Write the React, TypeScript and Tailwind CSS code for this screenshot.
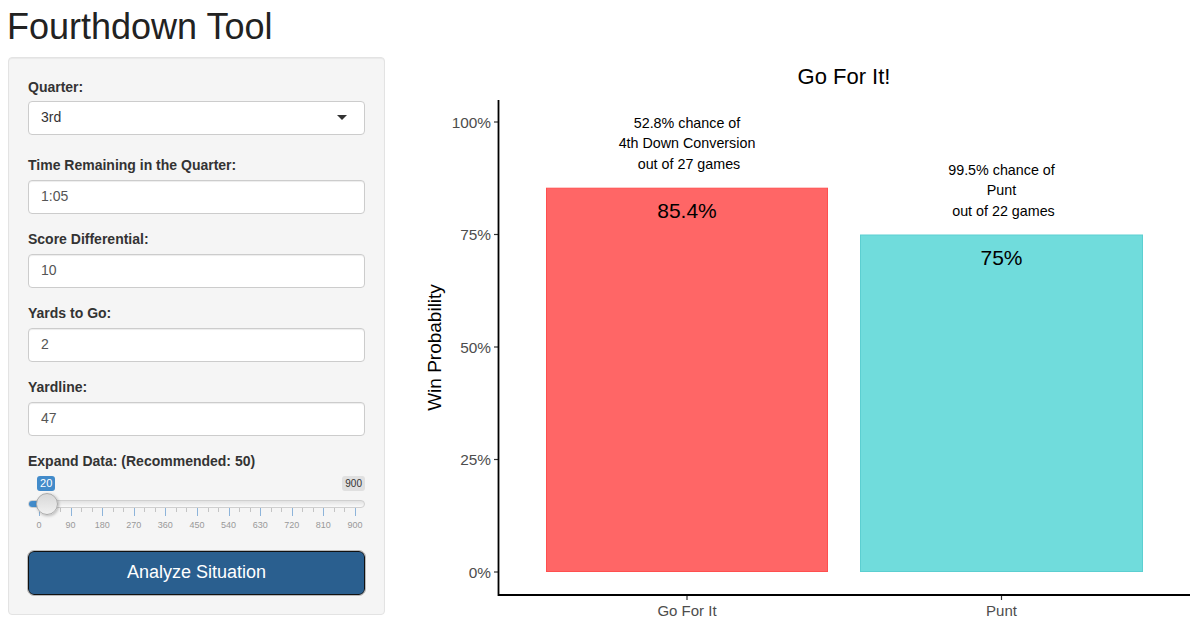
import React from 'react';

const fields = [
  { label: 'Time Remaining in the Quarter:', value: '1:05' },
  { label: 'Score Differential:', value: '10' },
  { label: 'Yards to Go:', value: '2' },
  { label: 'Yardline:', value: '47' },
];

// slider grid: 0..900, major every 90, two minor ticks between
const SLIDER_MAX = 900;
const GRID_LEFT = 11;
const GRID_WIDTH = 316;
const ticks = Array.from({ length: 31 }, (_, i) => ({ v: i * 30, major: i % 3 === 0 }));

function ExpandSlider({ value }: { value: number }) {
  const handle = GRID_LEFT + (value / SLIDER_MAX) * GRID_WIDTH;
  return (
    <div>
      <div className="mt-[5px] flex items-start justify-between">
        <span
          className="rounded-[3px] bg-[#428bca] px-[3px] text-[11px] leading-[15px] text-white"
          style={{ marginLeft: handle - 9 }}
        >
          {value}
        </span>
        <span className="rounded-[3px] bg-[#e0e0e0] px-[3px] text-[10px] leading-[15px] text-[#333]">900</span>
      </div>
      <div className="relative mt-[9px] h-[8px] rounded-full border border-[#cfcfcf] bg-gradient-to-b from-[#e2e2e2] to-[#fafafa]">
        <div className="h-full rounded-l-full bg-[#428bca]" style={{ width: handle }} />
        <div
          className="absolute -top-[8px] h-[22px] w-[22px] rounded-full border border-[#aaa] bg-gradient-to-b from-[#d8d8d8] to-[#f0f0f0] shadow-[1px_1px_3px_rgba(0,0,0,0.25)]"
          style={{ left: handle - 11 }}
        />
      </div>
      <div className="ml-[11px] mr-[9px] flex h-[8px] items-start justify-between">
        {ticks.map((t) => (
          <div key={t.v} className={t.major ? 'h-[8px] w-px bg-[#8db4da]' : 'h-[4px] w-px bg-[#c4c4c4]'} />
        ))}
      </div>
      <div className="ml-[-4px] mr-[-5px] mt-[4px] flex justify-between">
        {ticks
          .filter((t) => t.major)
          .map((t) => (
            <span key={t.v} className="w-[30px] text-center text-[9px] leading-[10px] text-[#999]">
              {t.v}
            </span>
          ))}
      </div>
    </div>
  );
}

function Sidebar() {
  return (
    <div className="w-[385px] shrink-0 pl-2">
      <h2 className="mb-[10px] ml-[-1px] mt-[7px] text-[36px] font-normal leading-[39.6px] text-[#222]">Fourthdown Tool</h2>
      <div className="rounded border border-[#e3e3e3] bg-[#f5f5f5] p-[19px] shadow-[inset_0_1px_1px_rgba(0,0,0,0.05)]">
        <label className="mb-[4px] block text-[14px] font-bold leading-[20px]">Quarter:</label>
        <div className="mb-[20px] flex h-[34px] items-center justify-between rounded border border-[#ccc] bg-white pl-[12px] pr-[17px] text-[14px] text-[#333]">
          <span>3rd</span>
          <span className="h-0 w-0 border-x-[5px] border-t-[5px] border-x-transparent border-t-[#333]" />
        </div>
        {fields.map((f) => (
          <div key={f.label} className="mb-[15px]">
            <label className="mb-[5px] block text-[14px] font-bold leading-[20px]">{f.label}</label>
            <div className="flex h-[34px] items-center rounded border border-[#ccc] bg-white px-[12px] text-[14px] text-[#555] shadow-[inset_0_1px_1px_rgba(0,0,0,0.075)]">
              {f.value}
            </div>
          </div>
        ))}
        <label className="block text-[14px] font-bold leading-[20px]">Expand Data: (Recommended: 50)</label>
        <ExpandSlider value={20} />
        <button className="mt-[21px] flex h-[44px] w-full items-center justify-center rounded-[6px] border border-[#111] bg-[#2a5f8f] text-[18px] text-white outline outline-1 outline-[#b9b9b9]">
          Analyze Situation
        </button>
      </div>
    </div>
  );
}

// ggplot-style bar chart, drawn in page coordinates
const Y0 = 572;
const PX_PER_UNIT = 450;
const bars = [
  { name: 'Go For It', x: 546, w: 282, p: 0.854, label: '85.4%', fill: '#ff6666', stroke: '#ff4f4f', note: ['52.8% chance of', '4th Down Conversion', ' out of 27 games'] },
  { name: 'Punt', x: 860, w: 283, p: 0.75, label: '75%', fill: '#70dcdc', stroke: '#5ccfd1', note: ['99.5% chance of', 'Punt', ' out of 22 games'] },
];

function WinChart() {
  const yTicks = [0, 0.25, 0.5, 0.75, 1];
  return (
    <svg viewBox="385 0 815 631" width={815} height={631} className="block">
      <text x={844} y={84} fontSize={22} textAnchor="middle" fill="#000">
        Go For It!
      </text>
      <text transform="translate(441 347.5) rotate(-90)" fontSize={19} textAnchor="middle" fill="#000">
        Win Probability
      </text>
      {yTicks.map((t) => {
        const y = Y0 - t * PX_PER_UNIT;
        return (
          <g key={t}>
            <line x1={494} x2={498} y1={y} y2={y} stroke="#333" strokeWidth={1.2} />
            <text x={491} y={y + 5.5} fontSize={15.4} textAnchor="end" fill="#4d4d4d">
              {Math.round(t * 100)}%
            </text>
          </g>
        );
      })}
      {bars.map((b) => {
        const top = Y0 - b.p * PX_PER_UNIT;
        const cx = b.x + b.w / 2;
        return (
          <g key={b.name}>
            <rect x={b.x + 0.5} y={top + 0.5} width={b.w - 1} height={Y0 - top - 1} fill={b.fill} stroke={b.stroke} strokeWidth={1} />
            <text x={cx} y={top + 30} fontSize={21} textAnchor="middle" fill="#000">
              {b.label}
            </text>
            {b.note.map((line, i) => (
              <text key={i} x={cx} y={top - 60 + i * 20.5} fontSize={14.3} textAnchor="middle" fill="#000" xmlSpace="preserve">
                {line}
              </text>
            ))}
            <line x1={cx} x2={cx} y1={595} y2={600} stroke="#333" strokeWidth={1.2} />
            <text x={cx} y={616} fontSize={15} textAnchor="middle" fill="#4d4d4d">
              {b.name}
            </text>
          </g>
        );
      })}
      <line x1={498.5} x2={498.5} y1={100} y2={596} stroke="#000" strokeWidth={1.8} />
      <line x1={498} x2={1190} y1={595} y2={595} stroke="#000" strokeWidth={1.8} />
    </svg>
  );
}

export default function App() {
  return (
    <div className="flex h-[631px] w-[1200px] overflow-hidden bg-white font-['Liberation_Sans',Arial,sans-serif] text-[#333]">
      <Sidebar />
      <WinChart />
    </div>
  );
}
